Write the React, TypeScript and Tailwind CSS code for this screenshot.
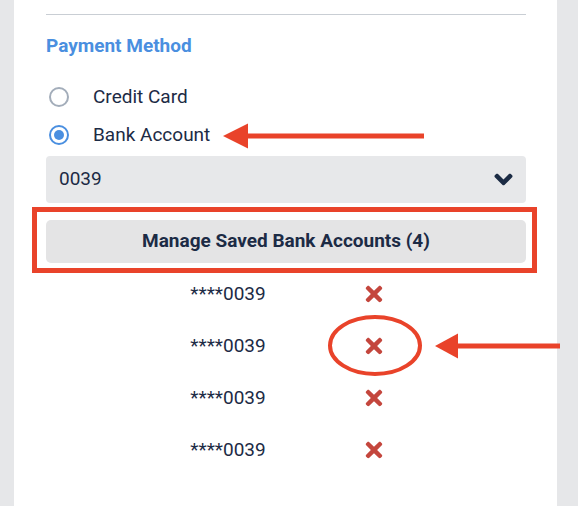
import React, { useState } from 'react';
import { FaAngleDown, FaTimes } from 'react-icons/fa';

const savedAccounts = ['0039', '0039', '0039', '0039'];

const Annotations: React.FC = () => (
  <svg
    className="pointer-events-none absolute left-0 top-0"
    width="578"
    height="506"
    viewBox="0 0 578 506"
  >
    <rect x="34.5" y="209.5" width="500" height="61" fill="none" stroke="#e9432a" strokeWidth="5" />
    <line x1="245" y1="136" x2="424" y2="136" stroke="#e9432a" strokeWidth="5" />
    <polygon points="223,136 248,123.5 248,148.5" fill="#e9432a" />
    <ellipse cx="375" cy="345.5" rx="45" ry="28.5" fill="none" stroke="#e9432a" strokeWidth="4" />
    <line x1="455" y1="346" x2="560" y2="346" stroke="#e9432a" strokeWidth="5" />
    <polygon points="435,346 458,333.5 458,358.5" fill="#e9432a" />
  </svg>
);

const Radio: React.FC<{ checked: boolean; label: string; onClick: () => void }> = ({ checked, label, onClick }) => (
  <button type="button" onClick={onClick} className="flex h-[38px] items-center text-left">
    <span
      className={`flex h-[20px] w-[20px] items-center justify-center rounded-full border-2 ml-[3px] ${
        checked ? 'border-[#4a8fe0]' : 'border-[#a3adba]'
      }`}
    >
      {checked && <span className="h-[10px] w-[10px] rounded-full bg-[#4a8fe0]" />}
    </span>
    <span className="ml-[24px] text-[19px] text-[#1c2b45]">{label}</span>
  </button>
);

export default function App() {
  const [method, setMethod] = useState<'card' | 'bank'>('bank');

  return (
    <div
      className="relative flex h-[506px] w-[578px] overflow-hidden bg-[#e6e7e9]"
      style={{ fontFamily: 'Roboto, "Liberation Sans", sans-serif' }}
    >
      <div className="ml-[14px] h-full w-[543px] bg-white pl-[32px] pr-[31px] pt-[14px]">
        <div className="h-px w-full bg-[#c9ced4]" />

        <h3 className="mt-[19px] h-[24px] text-[19px] font-bold leading-[24px] text-[#4a8fe0]">Payment Method</h3>

        <div className="mt-[20px] flex flex-col">
          <Radio checked={method === 'card'} label="Credit Card" onClick={() => setMethod('card')} />
          <Radio checked={method === 'bank'} label="Bank Account" onClick={() => setMethod('bank')} />
        </div>

        <div className="mt-[2px] flex h-[47px] items-center justify-between rounded-[4px] bg-[#e7e8ea] pl-[13px] pr-[8px]">
          <span className="text-[19px] text-[#1c2b45]">0039</span>
          <FaAngleDown size={29} className="text-[#1b2b44]" />
        </div>

        <button
          type="button"
          className="mt-[17px] flex h-[43px] w-full items-center justify-center rounded-[5px] bg-[#e4e4e5] text-[19px] font-bold text-[#1c2b45]"
        >
          Manage Saved Bank Accounts (4)
        </button>

        <div className="mt-[5px] flex flex-col">
          {savedAccounts.map((last4, i) => (
            <div key={i} className="grid h-[52px] grid-cols-[156px_136px] items-center pl-[104px]">
              <span className="text-center text-[19px] text-[#1c2b45]">****{last4}</span>
              <span className="flex justify-center">
                <FaTimes size={24} className="text-[#c4463d]" />
              </span>
            </div>
          ))}
        </div>
      </div>

      <Annotations />
    </div>
  );
}
